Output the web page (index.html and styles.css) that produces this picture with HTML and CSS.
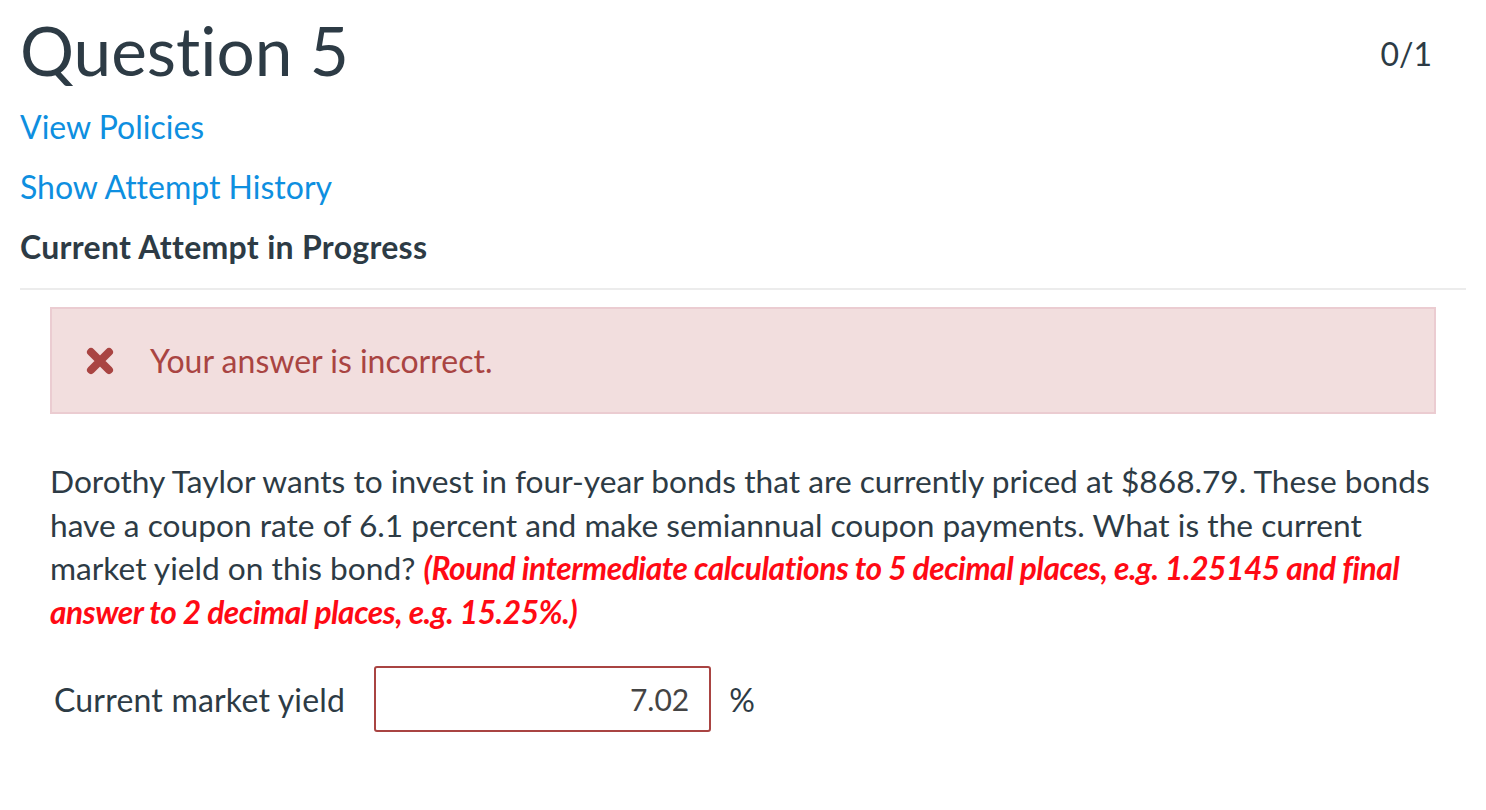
FILE: index.html
```html
<!DOCTYPE html>
<html lang="en">
<head>
    <meta charset="UTF-8">
    <title>Question 5</title>
    <link rel="stylesheet" href="styles.css">
</head>
<body>
    <div class="question">
        <div class="question-head">
            <h1 class="title">Question 5</h1>
            <span class="score">0/1</span>
        </div>
        <div class="links">
            <a href="#">View Policies</a>
            <a href="#">Show Attempt History</a>
        </div>
        <div class="attempt">Current Attempt in Progress</div>
        <hr class="divider">
        <div class="body">
            <div class="alert">
                <svg class="alert-icon" viewBox="0 0 28 28" width="28" height="28">
                    <path d="M5 5 L23 23 M23 5 L5 23" stroke="#a94442" stroke-width="8" stroke-linecap="round"/>
                </svg>
                <span>Your answer is incorrect.</span>
            </div>
            <p class="prompt">
                Dorothy Taylor wants to invest in four-year bonds that are currently priced at $868.79. These bonds have a coupon rate of 6.1 percent and make semiannual coupon payments. What is the current market yield on this bond? <span class="hint">(Round intermediate calculations to 5 decimal places, e.g. 1.25145 and final answer to 2 decimal places, e.g. 15.25%.)</span>
            </p>
            <div class="answer-row">
                <label for="yield">Current market yield</label>
                <input id="yield" class="answer-input" type="text" value="7.02">
                <span class="unit">%</span>
            </div>
        </div>
    </div>
</body>
</html>
```

FILE: styles.css
```css
body {
    margin: 0;
    padding: 0;
    font-family: Lato, 'Noto Sans', sans-serif;
    font-variant-ligatures: none;
    color: #2d3b45;
    background: #fff;
}
.question {
    padding: 0 20px;
}
.question-head {
    display: flex;
    justify-content: space-between;
    align-items: flex-start;
}
.title {
    margin: 0;
    padding-top: 10px;
    font-size: 67.5px;
    font-weight: 400;
    line-height: 80px;
}
.score {
    font-size: 32px;
    margin-top: 34px;
    margin-right: 34px;
}
.links {
    display: flex;
    flex-direction: column;
    align-items: flex-start;
    margin-top: 17px;
}
.links a {
    color: #0e8fe0;
    text-decoration: none;
    font-size: 32px;
    line-height: 40px;
    margin-bottom: 20px;
}
.attempt {
    font-size: 32px;
    font-weight: 700;
    letter-spacing: 0.3px;
    line-height: 40px;
}
.divider {
    border: none;
    border-top: 2px solid #ececec;
    margin: 21px 0 0;
}
.body {
    padding: 17px 30px 0;
}
.alert {
    display: flex;
    align-items: center;
    height: 107px;
    box-sizing: border-box;
    background: #f2dede;
    border: 2px solid #ebccd1;
    color: #a94442;
    font-size: 32px;
    padding: 0 0 0 34px;
}
.alert-icon {
    margin-right: 36px;
}
.prompt {
    margin: 46px 0 0;
    font-size: 31.7px;
    line-height: 43.5px;
}
.hint {
    color: #ff0a14;
    font-style: italic;
    font-weight: 700;
    letter-spacing: -0.45px;
}
.answer-row {
    display: flex;
    align-items: center;
    margin-top: 32px;
    font-size: 32px;
}
.answer-row label {
    padding-left: 4px;
    margin-right: 29px;
    letter-spacing: 0.2px;
}
.answer-input {
    width: 337px;
    height: 66px;
    box-sizing: border-box;
    border: 2px solid #a94442;
    border-radius: 3px;
    font-family: Lato, sans-serif;
    font-size: 30px;
    color: #444;
    text-align: right;
    padding: 0 20px;
    outline: none;
}
.unit {
    margin-left: 18px;
}
```
